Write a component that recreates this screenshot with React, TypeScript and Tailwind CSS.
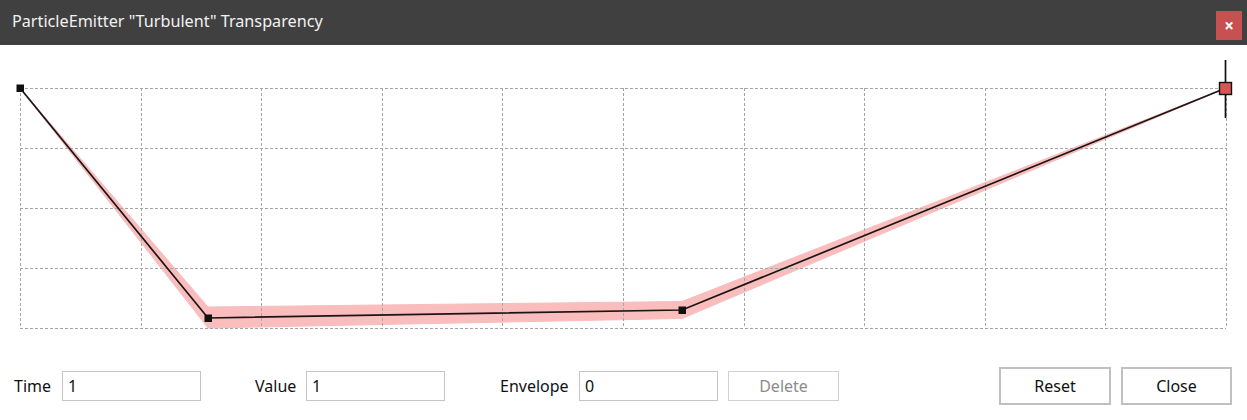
import React from "react";

const font = { fontFamily: '"Noto Sans", "Open Sans", "Liberation Sans", sans-serif' };

function Chart() {
  const xs = [20, 140.6, 261.2, 381.8, 502.4, 623, 743.6, 864.2, 984.8, 1105.4, 1226];
  const ys = [43, 103, 163, 223, 283];
  const pts = [
    [20, 43],
    [208, 273],
    [682, 265],
    [1226, 43],
  ];
  const upper = [
    [20, 43],
    [208, 262],
    [682, 256.5],
    [1226, 43],
  ];
  const lower = [
    [20, 43],
    [208, 283],
    [682, 273.5],
    [1226, 43],
  ];
  const band = [...upper, ...lower.slice().reverse()].map((p) => p.join(",")).join(" ");
  return (
    <svg width="1247" height="323" viewBox="0 0 1247 323" className="block">
      <polygon points={band} fill="#f9bdbd" stroke="#f9bdbd" strokeWidth="1" strokeLinejoin="round" />
      {ys.map((y) => (
        <line key={"h" + y} x1={20} x2={1226} y1={y + 0.5} y2={y + 0.5} stroke="#a6a6a6" strokeWidth="1" strokeDasharray="3 2" />
      ))}
      {xs.map((x) => (
        <line key={"v" + x} x1={Math.round(x) + 0.5} x2={Math.round(x) + 0.5} y1={43} y2={283} stroke="#a6a6a6" strokeWidth="1" strokeDasharray="3 2" />
      ))}
      <polyline points={pts.map((p) => p.join(",")).join(" ")} fill="none" stroke="#1c1414" strokeWidth="1.7" />
      {pts.slice(0, 3).map(([x, y]) => (
        <rect key={"p" + x} x={x - 3.5} y={y - 3.5} width="7.5" height="7.5" fill="#111" />
      ))}
      <line x1={1225.5} x2={1225.5} y1={15} y2={73} stroke="#111" strokeWidth="1.7" />
      <rect x={1219.5} y={37.5} width="12" height="12" fill="#d65656" stroke="#111" strokeWidth="1.4" />
    </svg>
  );
}

export default function App() {
  return (
    <div className="w-[1247px] h-[420px] bg-white flex flex-col overflow-hidden" style={font}>
      <div className="h-[45px] bg-[#404040] flex justify-between shrink-0">
        <div className="pl-3 pt-[10px] text-[16.2px] leading-[22px] text-[#f2f2f2]">ParticleEmitter "Turbulent" Transparency</div>
        <div className="mt-[11px] mr-[5px] w-[26px] h-[29px] bg-[#c75050] flex items-center justify-center text-white text-[17px] font-bold leading-none">
          ×
        </div>
      </div>
      <Chart />
      <div className="h-[38px] -mt-[1px] flex items-center pl-[14px] pr-[15px] text-[16px] text-[#111]">
        <div className="w-[48px]">Time</div>
        <div className="w-[139px] h-[30px] border border-[#c6c6c6] pl-[5px] flex items-center">1</div>
        <div className="w-[51px] ml-[54px]">Value</div>
        <div className="w-[139px] h-[30px] border border-[#c6c6c6] pl-[5px] flex items-center">1</div>
        <div className="w-[79px] ml-[55px]">Envelope</div>
        <div className="w-[139px] h-[30px] border border-[#c6c6c6] pl-[5px] flex items-center">0</div>
        <div className="ml-[10px] w-[111px] h-[30px] border border-[#d0d0d0] flex items-center justify-center text-[#8c8c8c]">Delete</div>
        <div className="flex-1" />
        <div className="w-[112px] h-[38px] border-2 border-[#c0c0c0] flex items-center justify-center">Reset</div>
        <div className="ml-[10px] w-[111px] h-[38px] border-2 border-[#c0c0c0] flex items-center justify-center">Close</div>
      </div>
    </div>
  );
}
